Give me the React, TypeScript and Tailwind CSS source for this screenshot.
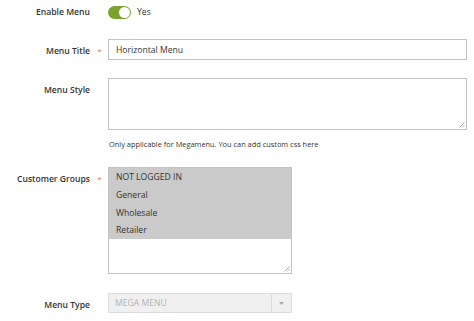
import React from 'react';

const font = { fontFamily: '"Open Sans", "Liberation Sans", sans-serif' };

function Label({ text, required, offset }: { text: string; required?: boolean; offset?: boolean }) {
    return (
        <div className={`flex w-[108px] shrink-0 ${offset ? 'pt-[2px]' : ''}`}>
            <div className="w-[90px] text-right text-[8.6px] font-semibold text-[#333] leading-[20px]">{text}</div>
            {required && <div className="w-[18px] text-center text-[8px] text-[#e8743b] leading-[20px] pl-[1px]">*</div>}
        </div>
    );
}

const groups = ['NOT LOGGED IN', 'General', 'Wholesale', 'Retailer'];

export default function App() {
    return (
        <div className="w-[474px] h-[321px] bg-white overflow-hidden" style={font}>
            {/* Enable Menu */}
            <div className="flex items-center pt-[2px] h-[22px]">
                <Label text="Enable Menu" />
                <div className="flex items-center gap-[6px]">
                    <div className="w-[23px] h-[13px] rounded-full bg-[#79a22e] flex items-center justify-end pr-[1px]">
                        <div className="w-[11px] h-[11px] rounded-full bg-white" />
                    </div>
                    <span className="text-[8.6px] text-[#333]">Yes</span>
                </div>
            </div>

            {/* Menu Title */}
            <div className="flex mt-[17px]">
                <Label text="Menu Title" required offset />
                <div className="w-[359px] h-[21px] border border-[#c2c2c2] bg-white px-[7px] pt-[1px] text-[8.6px] text-[#333] leading-[19px]">
                    Horizontal Menu
                </div>
            </div>

            {/* Menu Style */}
            <div className="flex mt-[17px]">
                <Label text="Menu Style" offset />
                <div className="flex flex-col">
                    <div className="relative w-[359px] h-[52px] border border-[#c2c2c2] bg-white">
                        <svg className="absolute right-[1px] bottom-[1px]" width="6" height="6" viewBox="0 0 6 6">
                            <path d="M5.5 0.5 L0.5 5.5 M5.5 3 L3 5.5" stroke="#999" strokeWidth="0.8" />
                        </svg>
                    </div>
                    <div className="text-[7.4px] text-[#333] mt-[9px] pl-[1px]">
                        Only applicable for Megamenu. You can add custom css here
                    </div>
                </div>
            </div>

            {/* Customer Groups */}
            <div className="flex mt-[17px]">
                <Label text="Customer Groups" required offset />
                <div className="relative w-[184px] h-[107px] border border-[#c2c2c2] bg-white">
                    {groups.map(g => (
                        <div key={g} className="h-[17.75px] bg-[#cacaca] px-[7px] pt-[1px] text-[8.6px] text-[#333] leading-[17.75px]">
                            {g}
                        </div>
                    ))}
                    <svg className="absolute right-[1px] bottom-[1px]" width="6" height="6" viewBox="0 0 6 6">
                        <path d="M5.5 0.5 L0.5 5.5 M5.5 3 L3 5.5" stroke="#999" strokeWidth="0.8" />
                    </svg>
                </div>
            </div>

            {/* Menu Type */}
            <div className="flex mt-[19px]">
                <Label text="Menu Type" offset />
                <div className="flex w-[184px] h-[20px] border border-[#dcdcdc] bg-[#f0f0f0]">
                    <div className="flex-1 px-[6px] text-[8.6px] text-[#b4b4b4] leading-[18px]">MEGA MENU</div>
                    <div className="w-[20px] border-l border-[#dcdcdc] flex items-center justify-center">
                        <svg width="5" height="3" viewBox="0 0 5 3">
                            <path d="M0 0 L5 0 L2.5 3 Z" fill="#aaa" />
                        </svg>
                    </div>
                </div>
            </div>
        </div>
    );
}
